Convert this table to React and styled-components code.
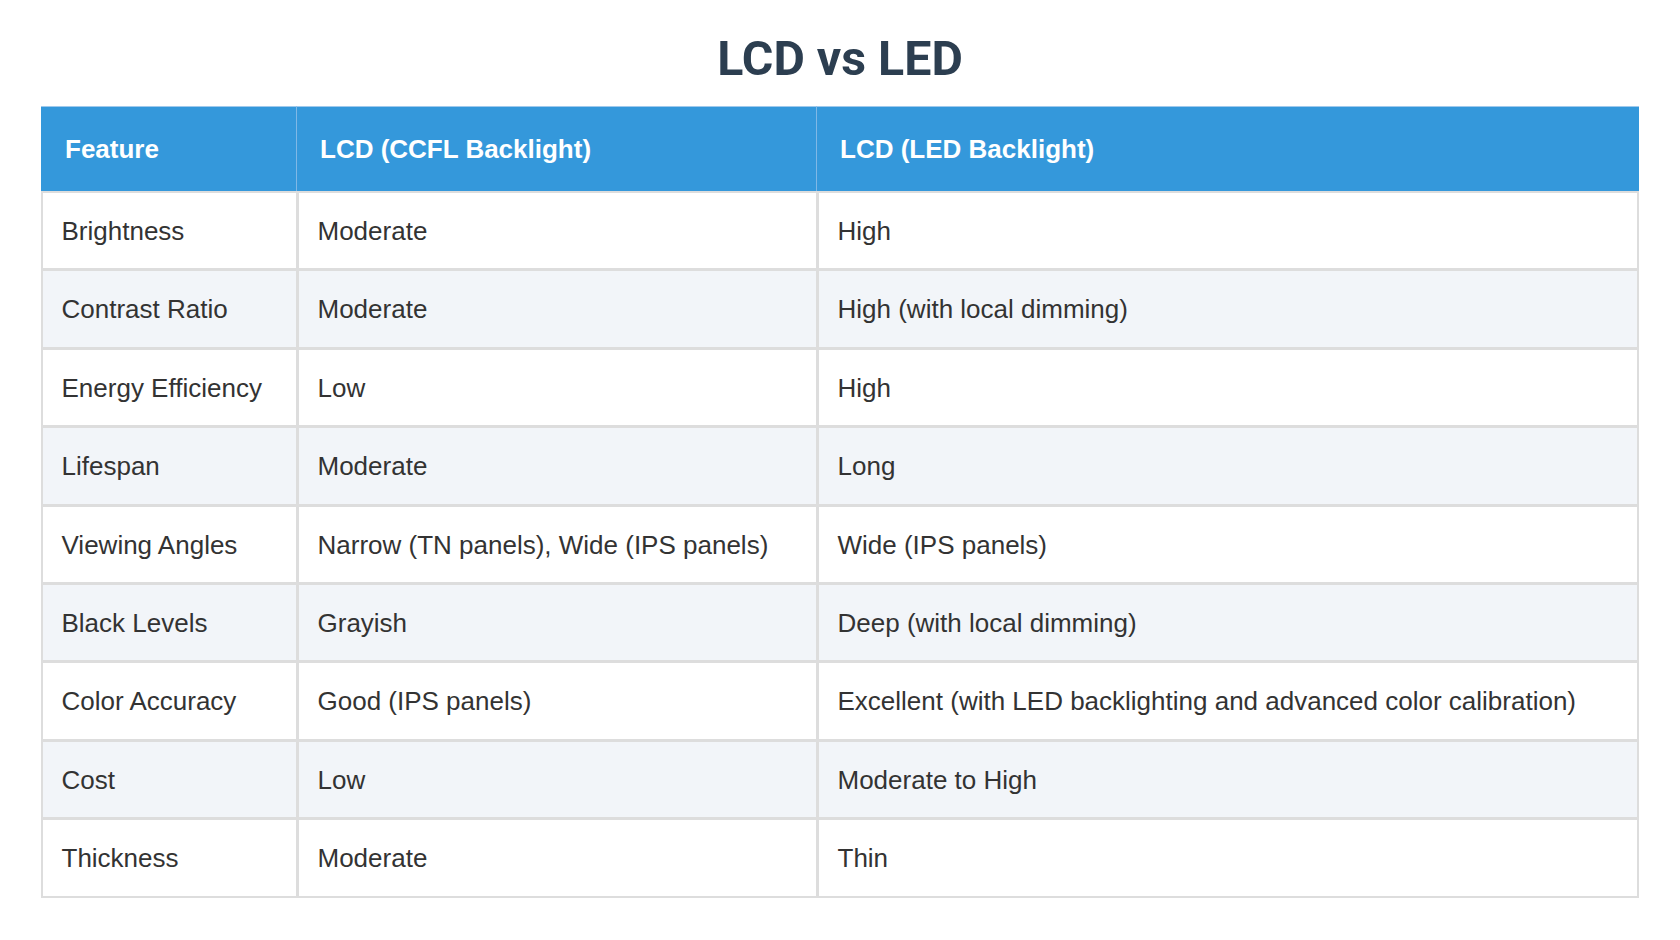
import React from "react";
import styled, { createGlobalStyle } from "styled-components";

const GlobalStyle = createGlobalStyle`
  html, body { margin: 0; padding: 0; background: #ffffff; }
  body { font-family: "Liberation Sans", Arial, sans-serif; }
`;

const Page = styled.div`
  padding: 29px 41px 0 41px;
  box-sizing: border-box;
  width: 1680px;
`;

const Title = styled.h1`
  margin: 0 0 17px 0;
  text-align: center;
  font-family: Roboto, "Liberation Sans", sans-serif;
  font-weight: 700;
  font-size: 48.3px;
  line-height: 60px;
  color: #2c3e50;
`;

const Table = styled.table`
  width: 100%;
  border-collapse: separate;
  border-spacing: 0;
  table-layout: fixed;
  font-family: "Liberation Sans", Arial, sans-serif;
  font-size: 26px;
`;

const HeadCell = styled.th`
  background: #3498db;
  color: #ffffff;
  font-weight: 700;
  text-align: left;
  line-height: 30px;
  padding: 27px 20px 27px ${(p) => (p.$first ? "24px" : "23px")};
  border-top: 1px solid #9fc9ec;
  border-left: ${(p) => (p.$first ? "none" : "1px solid #7fb8e6")};
`;

const Row = styled.tr`
  background: ${(p) => (p.$alt ? "#f2f5f9" : "#ffffff")};
`;

const Cell = styled.td`
  color: #333333;
  line-height: 29.4px;
  padding: 24px 18px 22px 18.5px;
  border-bottom: ${(p) => (p.$lastRow ? "2px" : "3px")} solid #dddddd;
  border-top: ${(p) => (p.$firstRow ? "2px solid #dddddd" : "none")};
  border-left: ${(p) => (p.$first ? "2px" : "3px")} solid #dddddd;
  border-right: ${(p) => (p.$last ? "2px solid #dddddd" : "none")};
  white-space: nowrap;
`;

const headers = ["Feature", "LCD (CCFL Backlight)", "LCD (LED Backlight)"];

const rows = [
  ["Brightness", "Moderate", "High"],
  ["Contrast Ratio", "Moderate", "High (with local dimming)"],
  ["Energy Efficiency", "Low", "High"],
  ["Lifespan", "Moderate", "Long"],
  ["Viewing Angles", "Narrow (TN panels), Wide (IPS panels)", "Wide (IPS panels)"],
  ["Black Levels", "Grayish", "Deep (with local dimming)"],
  ["Color Accuracy", "Good (IPS panels)", "Excellent (with LED backlighting and advanced color calibration)"],
  ["Cost", "Low", "Moderate to High"],
  ["Thickness", "Moderate", "Thin"],
];

export default function App() {
  return (
    <>
      <GlobalStyle />
      <Page>
        <Title>LCD vs LED</Title>
        <Table>
          <colgroup>
            <col style={{ width: "255px" }} />
            <col style={{ width: "520px" }} />
            <col />
          </colgroup>
          <thead>
            <tr>
              {headers.map((h, i) => (
                <HeadCell key={h} $first={i === 0}>
                  {h}
                </HeadCell>
              ))}
            </tr>
          </thead>
          <tbody>
            {rows.map((r, ri) => (
              <Row key={r[0]} $alt={ri % 2 === 1}>
                {r.map((c, ci) => (
                  <Cell
                    key={ci}
                    $first={ci === 0}
                    $last={ci === r.length - 1}
                    $firstRow={ri === 0}
                    $lastRow={ri === rows.length - 1}
                  >
                    {c}
                  </Cell>
                ))}
              </Row>
            ))}
          </tbody>
        </Table>
      </Page>
    </>
  );
}
